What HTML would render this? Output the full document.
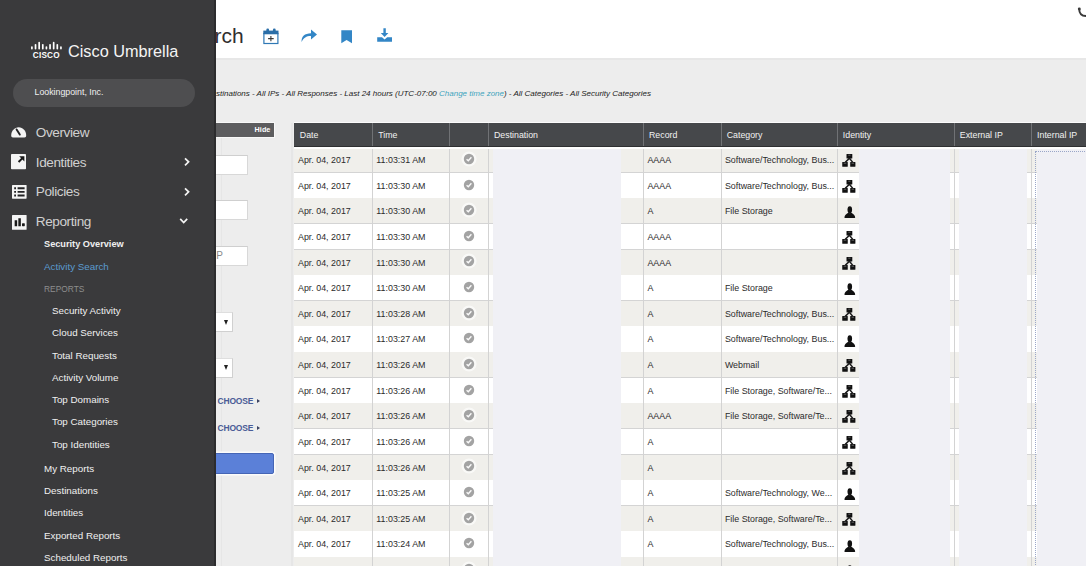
<!DOCTYPE html>
<html><head><meta charset="utf-8">
<style>
*{margin:0;padding:0;box-sizing:border-box}
html,body{width:1086px;height:566px;overflow:hidden;background:#ededed;font-family:"Liberation Sans",sans-serif}
.a{position:absolute;white-space:nowrap}
.nav{position:absolute;left:35.8px;font-size:13.6px;letter-spacing:-0.42px;color:#d0d0d0;white-space:nowrap;line-height:16px}
.sub{position:absolute;left:44px;font-size:9.8px;color:#f0f0f0;white-space:nowrap;line-height:12px}
.sub2{position:absolute;left:52px;font-size:9.8px;color:#f0f0f0;white-space:nowrap;line-height:12px}
.ic{position:absolute;left:11px}
.chev{position:absolute;left:181px}
.hd{position:absolute;top:123px;height:24px;background:#46484b;color:#f2f2f2;font-size:8.8px;line-height:24px;padding-left:5.5px;white-space:nowrap}
.hsep{position:absolute;top:123px;height:24px;width:1px;background:#707275}
.rw{position:absolute;left:294.3px;width:792px}
.cell{position:absolute;font-size:8.9px;color:#2b2b2b;white-space:nowrap}
.vl{position:absolute;width:1px;background:#d3d3d3}
.hl{position:absolute;height:1px;background:#d4d4d4;left:294.3px;width:792px}
</style></head><body>

<div class="a" style="left:0;top:0;width:1086px;height:58.3px;background:#fff"></div>
<div class="a" style="left:0;top:58.3px;width:1086px;height:1.5px;background:#e7e7e7"></div>
<div class="a" style="left:0;width:243.6px;text-align:right;top:23.3px;font-size:21px;line-height:26px;color:#2f2f2f">Activity Search</div>
<svg class="a" style="left:263px;top:27.5px" width="16" height="17" viewBox="0 0 16 17"><rect x="0.9" y="5.5" width="14" height="10" fill="none" stroke="#2f78b5" stroke-width="1.2"/><rect x="0.3" y="2.6" width="15.2" height="3.6" fill="#2a6ea8"/><rect x="3.3" y="0.6" width="2.8" height="3.2" rx="1.3" fill="#2a6ea8"/><rect x="9.9" y="0.6" width="2.8" height="3.2" rx="1.3" fill="#2a6ea8"/><path d="M7.9 7.9V13.3M5.1 10.6H10.7" stroke="#3a3a3a" stroke-width="1.1"/></svg>
<svg class="a" style="left:301px;top:28.5px" width="17" height="14" viewBox="0 0 17 14"><path d="M0.6 13C0.2 7.6 3.6 4.4 10 4.3V0.6L16 5.6L10 10.4V6.9C5.5 6.8 2.7 8.6 0.6 13Z" fill="#3386c6"/></svg>
<svg class="a" style="left:341px;top:29.5px" width="12" height="14" viewBox="0 0 12 14"><path d="M0.3 0.2H11V13.2L5.6 9.9L0.3 13.2Z" fill="#3386c6"/></svg>
<svg class="a" style="left:376.8px;top:28px" width="16" height="14" viewBox="0 0 16 14"><path d="M6.4 0.2H8.8V4.9H11.4L7.6 8.9L3.8 4.9H6.4Z" fill="#3386c6"/><path d="M0.2 9.3H5L7.6 11.4L10.2 9.3H15V13.7H0.2Z" fill="#3386c6"/></svg>
<svg class="a" style="left:1076px;top:6px" width="10" height="13" viewBox="0 0 10 13"><path d="M3.2 2.9C3.2 6.6 4.6 9.7 10 10" stroke="#3a3a3a" stroke-width="1.9" fill="none" stroke-linecap="round"/><circle cx="3.3" cy="3" r="1.45" fill="#3a3a3a"/></svg>
<div class="a" style="left:0;top:87.5px;width:651px;text-align:right;font-size:8px;line-height:11px;font-style:italic;color:#222">All Identities - All Destinations - All IPs - All Responses - Last 24 hours (UTC-07:00 <span style="color:#3fa4bd">Change time zone</span>) - All Categories - All Security Categories</div>
<div class="a" style="left:221px;top:137px;width:1px;height:430px;background:#e6e6e6"></div>
<div class="a" style="left:290.8px;top:123px;width:2.4px;height:444px;background:#e6e6e6"></div>
<div class="a" style="left:150px;top:123px;width:123.5px;height:14px;background:#5d5d5f;box-shadow:0 0 0 1px #f8f8f8"></div>
<div class="a" style="left:254.6px;top:122.7px;font-size:7.2px;line-height:14px;font-weight:bold;color:#fff;letter-spacing:0.05px">Hide</div>
<div class="a" style="left:150px;top:155.3px;width:98px;height:19.8px;background:#fff;border:1px solid #d8d8d8;border-top-color:#cfcfcf"></div>
<div class="a" style="left:150px;top:200.2px;width:98px;height:19.8px;background:#fff;border:1px solid #d8d8d8;border-top-color:#cfcfcf"></div>
<div class="a" style="left:150px;top:246px;width:98px;height:19.8px;background:#fff;border:1px solid #d8d8d8;border-top-color:#cfcfcf"></div>
<div class="a" style="left:213.6px;top:250.3px;font-size:10px;line-height:12px;color:#8a8a8a">IP</div>
<div class="a" style="left:150px;top:312.2px;width:83px;height:20px;background:#fff;border:1px solid #dedede;border-right-color:#d0d0d0;border-bottom-color:#d0d0d0"></div>
<div class="a" style="left:224px;top:319.59999999999997px;width:0;height:0;border-left:2.8px solid transparent;border-right:2.8px solid transparent;border-top:5px solid #222"></div>
<div class="a" style="left:150px;top:357.6px;width:83px;height:20px;background:#fff;border:1px solid #dedede;border-right-color:#d0d0d0;border-bottom-color:#d0d0d0"></div>
<div class="a" style="left:224px;top:365.0px;width:0;height:0;border-left:2.8px solid transparent;border-right:2.8px solid transparent;border-top:5px solid #222"></div>
<div class="a" style="left:217.5px;top:395.5px;font-size:8.5px;line-height:11px;font-weight:bold;color:#4a5c96;letter-spacing:-0.2px">CHOOSE</div>
<div class="a" style="left:257px;top:399.20000000000005px;width:0;height:0;border-top:2.6px solid transparent;border-bottom:2.6px solid transparent;border-left:3px solid #3b4260"></div>
<div class="a" style="left:217.5px;top:422.59999999999997px;font-size:8.5px;line-height:11px;font-weight:bold;color:#4a5c96;letter-spacing:-0.2px">CHOOSE</div>
<div class="a" style="left:257px;top:426.3px;width:0;height:0;border-top:2.6px solid transparent;border-bottom:2.6px solid transparent;border-left:3px solid #3b4260"></div>
<div class="a" style="left:150px;top:452.8px;width:123.8px;height:21.2px;background:#5b80d8;border-radius:2px;border:1px solid #4565b5;box-shadow:0 0 0 1.5px #fbfbfb"></div>
<div class="a" style="left:294.3px;top:121.8px;width:792px;height:1.2px;background:#fbfbfb"></div>
<div class="hd" style="left:294.30px;width:78.40px">Date</div>
<div class="hd" style="left:372.70px;width:77.00px">Time</div>
<div class="hsep" style="left:372.20px"></div>
<div class="hd" style="left:449.70px;width:38.80px"></div>
<div class="hsep" style="left:449.20px"></div>
<div class="hd" style="left:488.50px;width:155.00px">Destination</div>
<div class="hsep" style="left:488.00px"></div>
<div class="hd" style="left:643.50px;width:77.70px">Record</div>
<div class="hsep" style="left:643.00px"></div>
<div class="hd" style="left:721.20px;width:116.10px">Category</div>
<div class="hsep" style="left:720.70px"></div>
<div class="hd" style="left:837.30px;width:117.00px">Identity</div>
<div class="hsep" style="left:836.80px"></div>
<div class="hd" style="left:954.30px;width:77.30px">External IP</div>
<div class="hsep" style="left:953.80px"></div>
<div class="hd" style="left:1031.60px;width:68.40px">Internal IP</div>
<div class="hsep" style="left:1031.10px"></div>
<div class="a" style="left:294.3px;top:146px;width:792px;height:1px;background:#2e2f31"></div>
<div class="rw" style="top:147.00px;height:25.63px;background:#f0efeb"></div>
<div class="cell" style="left:298px;top:155.01px;line-height:11px">Apr. 04, 2017</div>
<div class="cell" style="left:376.3px;top:155.01px;line-height:11px">11:03:31 AM</div>
<div class="a" style="left:461.2px;top:150.91px;width:16px;height:16px"><svg width="16" height="16" viewBox="0 0 16 16"><circle cx="8" cy="8" r="7.6" fill="#fff" opacity="0.6"/><circle cx="8" cy="8" r="5.2" fill="#a3a3a3"/><path d="M5.6 8.2L7.3 9.7L10.4 6.3" stroke="#fafafa" stroke-width="1.4" fill="none"/></svg></div>
<div class="cell" style="left:647.4px;top:155.01px;line-height:11px">AAAA</div>
<div class="cell" style="left:724.9px;top:155.01px;line-height:11px">Software/Technology, Bus...</div>
<div class="a" style="left:842.4px;top:154.12px;width:15px;height:14px"><svg width="15" height="14" viewBox="0 0 15 14"><path d="M7.4 4.2L3.2 8.4M7.4 4.2L10.8 8.4" stroke="#1a1a1a" stroke-width="1.5" fill="none"/><rect x="4.5" y="0" width="5.8" height="4.6" rx="0.5" fill="#111"/><rect x="0.25" y="8" width="5.5" height="4.8" rx="0.5" fill="#111"/><rect x="8.2" y="8" width="5.2" height="4.8" rx="0.5" fill="#111"/><path d="M6.3 1.2H8.5M1.7 9.2H4.3M9.6 9.2H12" stroke="#777" stroke-width="0.8"/></svg></div>
<div class="hl" style="top:172.13px"></div>
<div class="rw" style="top:172.63px;height:25.63px;background:#ffffff"></div>
<div class="cell" style="left:298px;top:180.64px;line-height:11px">Apr. 04, 2017</div>
<div class="cell" style="left:376.3px;top:180.64px;line-height:11px">11:03:30 AM</div>
<div class="a" style="left:461.2px;top:176.54px;width:16px;height:16px"><svg width="16" height="16" viewBox="0 0 16 16"><circle cx="8" cy="8" r="7.6" fill="#fff" opacity="0.6"/><circle cx="8" cy="8" r="5.2" fill="#a3a3a3"/><path d="M5.6 8.2L7.3 9.7L10.4 6.3" stroke="#fafafa" stroke-width="1.4" fill="none"/></svg></div>
<div class="cell" style="left:647.4px;top:180.64px;line-height:11px">AAAA</div>
<div class="cell" style="left:724.9px;top:180.64px;line-height:11px">Software/Technology, Bus...</div>
<div class="a" style="left:842.4px;top:179.75px;width:15px;height:14px"><svg width="15" height="14" viewBox="0 0 15 14"><path d="M7.4 4.2L3.2 8.4M7.4 4.2L10.8 8.4" stroke="#1a1a1a" stroke-width="1.5" fill="none"/><rect x="4.5" y="0" width="5.8" height="4.6" rx="0.5" fill="#111"/><rect x="0.25" y="8" width="5.5" height="4.8" rx="0.5" fill="#111"/><rect x="8.2" y="8" width="5.2" height="4.8" rx="0.5" fill="#111"/><path d="M6.3 1.2H8.5M1.7 9.2H4.3M9.6 9.2H12" stroke="#777" stroke-width="0.8"/></svg></div>
<div class="hl" style="top:197.76px"></div>
<div class="rw" style="top:198.26px;height:25.63px;background:#f0efeb"></div>
<div class="cell" style="left:298px;top:206.27px;line-height:11px">Apr. 04, 2017</div>
<div class="cell" style="left:376.3px;top:206.27px;line-height:11px">11:03:30 AM</div>
<div class="a" style="left:461.2px;top:202.17px;width:16px;height:16px"><svg width="16" height="16" viewBox="0 0 16 16"><circle cx="8" cy="8" r="7.6" fill="#fff" opacity="0.6"/><circle cx="8" cy="8" r="5.2" fill="#a3a3a3"/><path d="M5.6 8.2L7.3 9.7L10.4 6.3" stroke="#fafafa" stroke-width="1.4" fill="none"/></svg></div>
<div class="cell" style="left:647.4px;top:206.27px;line-height:11px">A</div>
<div class="cell" style="left:724.9px;top:206.27px;line-height:11px">File Storage</div>
<div class="a" style="left:843.5px;top:205.47px;width:13px;height:13px"><svg width="13" height="13" viewBox="0 0 13 13"><ellipse cx="5.8" cy="3.7" rx="2.3" ry="3.4" fill="#111"/><path d="M4.5 5.5H7.1V7.8H4.5Z" fill="#111"/><path d="M0.4 11.5C0.6 9.2 2.2 7.9 4.2 6.8L5.8 7.5L7.4 6.8C9.4 7.9 11 9.2 11.2 11.5C11.2 11.8 11 12 10.6 12H1C0.6 12 0.4 11.8 0.4 11.5Z" fill="#111"/></svg></div>
<div class="hl" style="top:223.39px"></div>
<div class="rw" style="top:223.89px;height:25.63px;background:#ffffff"></div>
<div class="cell" style="left:298px;top:231.90px;line-height:11px">Apr. 04, 2017</div>
<div class="cell" style="left:376.3px;top:231.90px;line-height:11px">11:03:30 AM</div>
<div class="a" style="left:461.2px;top:227.80px;width:16px;height:16px"><svg width="16" height="16" viewBox="0 0 16 16"><circle cx="8" cy="8" r="7.6" fill="#fff" opacity="0.6"/><circle cx="8" cy="8" r="5.2" fill="#a3a3a3"/><path d="M5.6 8.2L7.3 9.7L10.4 6.3" stroke="#fafafa" stroke-width="1.4" fill="none"/></svg></div>
<div class="cell" style="left:647.4px;top:231.90px;line-height:11px">AAAA</div>
<div class="a" style="left:842.4px;top:231.00px;width:15px;height:14px"><svg width="15" height="14" viewBox="0 0 15 14"><path d="M7.4 4.2L3.2 8.4M7.4 4.2L10.8 8.4" stroke="#1a1a1a" stroke-width="1.5" fill="none"/><rect x="4.5" y="0" width="5.8" height="4.6" rx="0.5" fill="#111"/><rect x="0.25" y="8" width="5.5" height="4.8" rx="0.5" fill="#111"/><rect x="8.2" y="8" width="5.2" height="4.8" rx="0.5" fill="#111"/><path d="M6.3 1.2H8.5M1.7 9.2H4.3M9.6 9.2H12" stroke="#777" stroke-width="0.8"/></svg></div>
<div class="hl" style="top:249.02px"></div>
<div class="rw" style="top:249.52px;height:25.63px;background:#f0efeb"></div>
<div class="cell" style="left:298px;top:257.53px;line-height:11px">Apr. 04, 2017</div>
<div class="cell" style="left:376.3px;top:257.53px;line-height:11px">11:03:30 AM</div>
<div class="a" style="left:461.2px;top:253.43px;width:16px;height:16px"><svg width="16" height="16" viewBox="0 0 16 16"><circle cx="8" cy="8" r="7.6" fill="#fff" opacity="0.6"/><circle cx="8" cy="8" r="5.2" fill="#a3a3a3"/><path d="M5.6 8.2L7.3 9.7L10.4 6.3" stroke="#fafafa" stroke-width="1.4" fill="none"/></svg></div>
<div class="cell" style="left:647.4px;top:257.53px;line-height:11px">AAAA</div>
<div class="a" style="left:842.4px;top:256.63px;width:15px;height:14px"><svg width="15" height="14" viewBox="0 0 15 14"><path d="M7.4 4.2L3.2 8.4M7.4 4.2L10.8 8.4" stroke="#1a1a1a" stroke-width="1.5" fill="none"/><rect x="4.5" y="0" width="5.8" height="4.6" rx="0.5" fill="#111"/><rect x="0.25" y="8" width="5.5" height="4.8" rx="0.5" fill="#111"/><rect x="8.2" y="8" width="5.2" height="4.8" rx="0.5" fill="#111"/><path d="M6.3 1.2H8.5M1.7 9.2H4.3M9.6 9.2H12" stroke="#777" stroke-width="0.8"/></svg></div>
<div class="hl" style="top:274.65px"></div>
<div class="rw" style="top:275.15px;height:25.63px;background:#ffffff"></div>
<div class="cell" style="left:298px;top:283.16px;line-height:11px">Apr. 04, 2017</div>
<div class="cell" style="left:376.3px;top:283.16px;line-height:11px">11:03:30 AM</div>
<div class="a" style="left:461.2px;top:279.06px;width:16px;height:16px"><svg width="16" height="16" viewBox="0 0 16 16"><circle cx="8" cy="8" r="7.6" fill="#fff" opacity="0.6"/><circle cx="8" cy="8" r="5.2" fill="#a3a3a3"/><path d="M5.6 8.2L7.3 9.7L10.4 6.3" stroke="#fafafa" stroke-width="1.4" fill="none"/></svg></div>
<div class="cell" style="left:647.4px;top:283.16px;line-height:11px">A</div>
<div class="cell" style="left:724.9px;top:283.16px;line-height:11px">File Storage</div>
<div class="a" style="left:843.5px;top:282.36px;width:13px;height:13px"><svg width="13" height="13" viewBox="0 0 13 13"><ellipse cx="5.8" cy="3.7" rx="2.3" ry="3.4" fill="#111"/><path d="M4.5 5.5H7.1V7.8H4.5Z" fill="#111"/><path d="M0.4 11.5C0.6 9.2 2.2 7.9 4.2 6.8L5.8 7.5L7.4 6.8C9.4 7.9 11 9.2 11.2 11.5C11.2 11.8 11 12 10.6 12H1C0.6 12 0.4 11.8 0.4 11.5Z" fill="#111"/></svg></div>
<div class="hl" style="top:300.28px"></div>
<div class="rw" style="top:300.78px;height:25.63px;background:#f0efeb"></div>
<div class="cell" style="left:298px;top:308.79px;line-height:11px">Apr. 04, 2017</div>
<div class="cell" style="left:376.3px;top:308.79px;line-height:11px">11:03:28 AM</div>
<div class="a" style="left:461.2px;top:304.69px;width:16px;height:16px"><svg width="16" height="16" viewBox="0 0 16 16"><circle cx="8" cy="8" r="7.6" fill="#fff" opacity="0.6"/><circle cx="8" cy="8" r="5.2" fill="#a3a3a3"/><path d="M5.6 8.2L7.3 9.7L10.4 6.3" stroke="#fafafa" stroke-width="1.4" fill="none"/></svg></div>
<div class="cell" style="left:647.4px;top:308.79px;line-height:11px">A</div>
<div class="cell" style="left:724.9px;top:308.79px;line-height:11px">Software/Technology, Bus...</div>
<div class="a" style="left:842.4px;top:307.89px;width:15px;height:14px"><svg width="15" height="14" viewBox="0 0 15 14"><path d="M7.4 4.2L3.2 8.4M7.4 4.2L10.8 8.4" stroke="#1a1a1a" stroke-width="1.5" fill="none"/><rect x="4.5" y="0" width="5.8" height="4.6" rx="0.5" fill="#111"/><rect x="0.25" y="8" width="5.5" height="4.8" rx="0.5" fill="#111"/><rect x="8.2" y="8" width="5.2" height="4.8" rx="0.5" fill="#111"/><path d="M6.3 1.2H8.5M1.7 9.2H4.3M9.6 9.2H12" stroke="#777" stroke-width="0.8"/></svg></div>
<div class="hl" style="top:325.91px"></div>
<div class="rw" style="top:326.41px;height:25.63px;background:#ffffff"></div>
<div class="cell" style="left:298px;top:334.42px;line-height:11px">Apr. 04, 2017</div>
<div class="cell" style="left:376.3px;top:334.42px;line-height:11px">11:03:27 AM</div>
<div class="a" style="left:461.2px;top:330.32px;width:16px;height:16px"><svg width="16" height="16" viewBox="0 0 16 16"><circle cx="8" cy="8" r="7.6" fill="#fff" opacity="0.6"/><circle cx="8" cy="8" r="5.2" fill="#a3a3a3"/><path d="M5.6 8.2L7.3 9.7L10.4 6.3" stroke="#fafafa" stroke-width="1.4" fill="none"/></svg></div>
<div class="cell" style="left:647.4px;top:334.42px;line-height:11px">A</div>
<div class="cell" style="left:724.9px;top:334.42px;line-height:11px">Software/Technology, Bus...</div>
<div class="a" style="left:843.5px;top:333.62px;width:13px;height:13px"><svg width="13" height="13" viewBox="0 0 13 13"><ellipse cx="5.8" cy="3.7" rx="2.3" ry="3.4" fill="#111"/><path d="M4.5 5.5H7.1V7.8H4.5Z" fill="#111"/><path d="M0.4 11.5C0.6 9.2 2.2 7.9 4.2 6.8L5.8 7.5L7.4 6.8C9.4 7.9 11 9.2 11.2 11.5C11.2 11.8 11 12 10.6 12H1C0.6 12 0.4 11.8 0.4 11.5Z" fill="#111"/></svg></div>
<div class="hl" style="top:351.54px"></div>
<div class="rw" style="top:352.04px;height:25.63px;background:#f0efeb"></div>
<div class="cell" style="left:298px;top:360.05px;line-height:11px">Apr. 04, 2017</div>
<div class="cell" style="left:376.3px;top:360.05px;line-height:11px">11:03:26 AM</div>
<div class="a" style="left:461.2px;top:355.95px;width:16px;height:16px"><svg width="16" height="16" viewBox="0 0 16 16"><circle cx="8" cy="8" r="7.6" fill="#fff" opacity="0.6"/><circle cx="8" cy="8" r="5.2" fill="#a3a3a3"/><path d="M5.6 8.2L7.3 9.7L10.4 6.3" stroke="#fafafa" stroke-width="1.4" fill="none"/></svg></div>
<div class="cell" style="left:647.4px;top:360.05px;line-height:11px">A</div>
<div class="cell" style="left:724.9px;top:360.05px;line-height:11px">Webmail</div>
<div class="a" style="left:842.4px;top:359.15px;width:15px;height:14px"><svg width="15" height="14" viewBox="0 0 15 14"><path d="M7.4 4.2L3.2 8.4M7.4 4.2L10.8 8.4" stroke="#1a1a1a" stroke-width="1.5" fill="none"/><rect x="4.5" y="0" width="5.8" height="4.6" rx="0.5" fill="#111"/><rect x="0.25" y="8" width="5.5" height="4.8" rx="0.5" fill="#111"/><rect x="8.2" y="8" width="5.2" height="4.8" rx="0.5" fill="#111"/><path d="M6.3 1.2H8.5M1.7 9.2H4.3M9.6 9.2H12" stroke="#777" stroke-width="0.8"/></svg></div>
<div class="hl" style="top:377.17px"></div>
<div class="rw" style="top:377.67px;height:25.63px;background:#ffffff"></div>
<div class="cell" style="left:298px;top:385.68px;line-height:11px">Apr. 04, 2017</div>
<div class="cell" style="left:376.3px;top:385.68px;line-height:11px">11:03:26 AM</div>
<div class="a" style="left:461.2px;top:381.58px;width:16px;height:16px"><svg width="16" height="16" viewBox="0 0 16 16"><circle cx="8" cy="8" r="7.6" fill="#fff" opacity="0.6"/><circle cx="8" cy="8" r="5.2" fill="#a3a3a3"/><path d="M5.6 8.2L7.3 9.7L10.4 6.3" stroke="#fafafa" stroke-width="1.4" fill="none"/></svg></div>
<div class="cell" style="left:647.4px;top:385.68px;line-height:11px">A</div>
<div class="cell" style="left:724.9px;top:385.68px;line-height:11px">File Storage, Software/Te...</div>
<div class="a" style="left:842.4px;top:384.78px;width:15px;height:14px"><svg width="15" height="14" viewBox="0 0 15 14"><path d="M7.4 4.2L3.2 8.4M7.4 4.2L10.8 8.4" stroke="#1a1a1a" stroke-width="1.5" fill="none"/><rect x="4.5" y="0" width="5.8" height="4.6" rx="0.5" fill="#111"/><rect x="0.25" y="8" width="5.5" height="4.8" rx="0.5" fill="#111"/><rect x="8.2" y="8" width="5.2" height="4.8" rx="0.5" fill="#111"/><path d="M6.3 1.2H8.5M1.7 9.2H4.3M9.6 9.2H12" stroke="#777" stroke-width="0.8"/></svg></div>
<div class="hl" style="top:402.80px"></div>
<div class="rw" style="top:403.30px;height:25.63px;background:#f0efeb"></div>
<div class="cell" style="left:298px;top:411.31px;line-height:11px">Apr. 04, 2017</div>
<div class="cell" style="left:376.3px;top:411.31px;line-height:11px">11:03:26 AM</div>
<div class="a" style="left:461.2px;top:407.22px;width:16px;height:16px"><svg width="16" height="16" viewBox="0 0 16 16"><circle cx="8" cy="8" r="7.6" fill="#fff" opacity="0.6"/><circle cx="8" cy="8" r="5.2" fill="#a3a3a3"/><path d="M5.6 8.2L7.3 9.7L10.4 6.3" stroke="#fafafa" stroke-width="1.4" fill="none"/></svg></div>
<div class="cell" style="left:647.4px;top:411.31px;line-height:11px">AAAA</div>
<div class="cell" style="left:724.9px;top:411.31px;line-height:11px">File Storage, Software/Te...</div>
<div class="a" style="left:842.4px;top:410.42px;width:15px;height:14px"><svg width="15" height="14" viewBox="0 0 15 14"><path d="M7.4 4.2L3.2 8.4M7.4 4.2L10.8 8.4" stroke="#1a1a1a" stroke-width="1.5" fill="none"/><rect x="4.5" y="0" width="5.8" height="4.6" rx="0.5" fill="#111"/><rect x="0.25" y="8" width="5.5" height="4.8" rx="0.5" fill="#111"/><rect x="8.2" y="8" width="5.2" height="4.8" rx="0.5" fill="#111"/><path d="M6.3 1.2H8.5M1.7 9.2H4.3M9.6 9.2H12" stroke="#777" stroke-width="0.8"/></svg></div>
<div class="hl" style="top:428.43px"></div>
<div class="rw" style="top:428.93px;height:25.63px;background:#ffffff"></div>
<div class="cell" style="left:298px;top:436.94px;line-height:11px">Apr. 04, 2017</div>
<div class="cell" style="left:376.3px;top:436.94px;line-height:11px">11:03:26 AM</div>
<div class="a" style="left:461.2px;top:432.85px;width:16px;height:16px"><svg width="16" height="16" viewBox="0 0 16 16"><circle cx="8" cy="8" r="7.6" fill="#fff" opacity="0.6"/><circle cx="8" cy="8" r="5.2" fill="#a3a3a3"/><path d="M5.6 8.2L7.3 9.7L10.4 6.3" stroke="#fafafa" stroke-width="1.4" fill="none"/></svg></div>
<div class="cell" style="left:647.4px;top:436.94px;line-height:11px">A</div>
<div class="a" style="left:842.4px;top:436.05px;width:15px;height:14px"><svg width="15" height="14" viewBox="0 0 15 14"><path d="M7.4 4.2L3.2 8.4M7.4 4.2L10.8 8.4" stroke="#1a1a1a" stroke-width="1.5" fill="none"/><rect x="4.5" y="0" width="5.8" height="4.6" rx="0.5" fill="#111"/><rect x="0.25" y="8" width="5.5" height="4.8" rx="0.5" fill="#111"/><rect x="8.2" y="8" width="5.2" height="4.8" rx="0.5" fill="#111"/><path d="M6.3 1.2H8.5M1.7 9.2H4.3M9.6 9.2H12" stroke="#777" stroke-width="0.8"/></svg></div>
<div class="hl" style="top:454.06px"></div>
<div class="rw" style="top:454.56px;height:25.63px;background:#f0efeb"></div>
<div class="cell" style="left:298px;top:462.57px;line-height:11px">Apr. 04, 2017</div>
<div class="cell" style="left:376.3px;top:462.57px;line-height:11px">11:03:26 AM</div>
<div class="a" style="left:461.2px;top:458.48px;width:16px;height:16px"><svg width="16" height="16" viewBox="0 0 16 16"><circle cx="8" cy="8" r="7.6" fill="#fff" opacity="0.6"/><circle cx="8" cy="8" r="5.2" fill="#a3a3a3"/><path d="M5.6 8.2L7.3 9.7L10.4 6.3" stroke="#fafafa" stroke-width="1.4" fill="none"/></svg></div>
<div class="cell" style="left:647.4px;top:462.57px;line-height:11px">A</div>
<div class="a" style="left:842.4px;top:461.68px;width:15px;height:14px"><svg width="15" height="14" viewBox="0 0 15 14"><path d="M7.4 4.2L3.2 8.4M7.4 4.2L10.8 8.4" stroke="#1a1a1a" stroke-width="1.5" fill="none"/><rect x="4.5" y="0" width="5.8" height="4.6" rx="0.5" fill="#111"/><rect x="0.25" y="8" width="5.5" height="4.8" rx="0.5" fill="#111"/><rect x="8.2" y="8" width="5.2" height="4.8" rx="0.5" fill="#111"/><path d="M6.3 1.2H8.5M1.7 9.2H4.3M9.6 9.2H12" stroke="#777" stroke-width="0.8"/></svg></div>
<div class="hl" style="top:479.69px"></div>
<div class="rw" style="top:480.19px;height:25.63px;background:#ffffff"></div>
<div class="cell" style="left:298px;top:488.20px;line-height:11px">Apr. 04, 2017</div>
<div class="cell" style="left:376.3px;top:488.20px;line-height:11px">11:03:25 AM</div>
<div class="a" style="left:461.2px;top:484.11px;width:16px;height:16px"><svg width="16" height="16" viewBox="0 0 16 16"><circle cx="8" cy="8" r="7.6" fill="#fff" opacity="0.6"/><circle cx="8" cy="8" r="5.2" fill="#a3a3a3"/><path d="M5.6 8.2L7.3 9.7L10.4 6.3" stroke="#fafafa" stroke-width="1.4" fill="none"/></svg></div>
<div class="cell" style="left:647.4px;top:488.20px;line-height:11px">A</div>
<div class="cell" style="left:724.9px;top:488.20px;line-height:11px">Software/Technology, We...</div>
<div class="a" style="left:843.5px;top:487.40px;width:13px;height:13px"><svg width="13" height="13" viewBox="0 0 13 13"><ellipse cx="5.8" cy="3.7" rx="2.3" ry="3.4" fill="#111"/><path d="M4.5 5.5H7.1V7.8H4.5Z" fill="#111"/><path d="M0.4 11.5C0.6 9.2 2.2 7.9 4.2 6.8L5.8 7.5L7.4 6.8C9.4 7.9 11 9.2 11.2 11.5C11.2 11.8 11 12 10.6 12H1C0.6 12 0.4 11.8 0.4 11.5Z" fill="#111"/></svg></div>
<div class="hl" style="top:505.32px"></div>
<div class="rw" style="top:505.82px;height:25.63px;background:#f0efeb"></div>
<div class="cell" style="left:298px;top:513.84px;line-height:11px">Apr. 04, 2017</div>
<div class="cell" style="left:376.3px;top:513.84px;line-height:11px">11:03:25 AM</div>
<div class="a" style="left:461.2px;top:509.74px;width:16px;height:16px"><svg width="16" height="16" viewBox="0 0 16 16"><circle cx="8" cy="8" r="7.6" fill="#fff" opacity="0.6"/><circle cx="8" cy="8" r="5.2" fill="#a3a3a3"/><path d="M5.6 8.2L7.3 9.7L10.4 6.3" stroke="#fafafa" stroke-width="1.4" fill="none"/></svg></div>
<div class="cell" style="left:647.4px;top:513.84px;line-height:11px">A</div>
<div class="cell" style="left:724.9px;top:513.84px;line-height:11px">File Storage, Software/Te...</div>
<div class="a" style="left:842.4px;top:512.93px;width:15px;height:14px"><svg width="15" height="14" viewBox="0 0 15 14"><path d="M7.4 4.2L3.2 8.4M7.4 4.2L10.8 8.4" stroke="#1a1a1a" stroke-width="1.5" fill="none"/><rect x="4.5" y="0" width="5.8" height="4.6" rx="0.5" fill="#111"/><rect x="0.25" y="8" width="5.5" height="4.8" rx="0.5" fill="#111"/><rect x="8.2" y="8" width="5.2" height="4.8" rx="0.5" fill="#111"/><path d="M6.3 1.2H8.5M1.7 9.2H4.3M9.6 9.2H12" stroke="#777" stroke-width="0.8"/></svg></div>
<div class="hl" style="top:530.95px"></div>
<div class="rw" style="top:531.45px;height:25.63px;background:#ffffff"></div>
<div class="cell" style="left:298px;top:539.47px;line-height:11px">Apr. 04, 2017</div>
<div class="cell" style="left:376.3px;top:539.47px;line-height:11px">11:03:24 AM</div>
<div class="a" style="left:461.2px;top:535.37px;width:16px;height:16px"><svg width="16" height="16" viewBox="0 0 16 16"><circle cx="8" cy="8" r="7.6" fill="#fff" opacity="0.6"/><circle cx="8" cy="8" r="5.2" fill="#a3a3a3"/><path d="M5.6 8.2L7.3 9.7L10.4 6.3" stroke="#fafafa" stroke-width="1.4" fill="none"/></svg></div>
<div class="cell" style="left:647.4px;top:539.47px;line-height:11px">A</div>
<div class="cell" style="left:724.9px;top:539.47px;line-height:11px">Software/Technology, Bus...</div>
<div class="a" style="left:843.5px;top:538.67px;width:13px;height:13px"><svg width="13" height="13" viewBox="0 0 13 13"><ellipse cx="5.8" cy="3.7" rx="2.3" ry="3.4" fill="#111"/><path d="M4.5 5.5H7.1V7.8H4.5Z" fill="#111"/><path d="M0.4 11.5C0.6 9.2 2.2 7.9 4.2 6.8L5.8 7.5L7.4 6.8C9.4 7.9 11 9.2 11.2 11.5C11.2 11.8 11 12 10.6 12H1C0.6 12 0.4 11.8 0.4 11.5Z" fill="#111"/></svg></div>
<div class="hl" style="top:556.58px"></div>
<div class="rw" style="top:557.08px;height:25.63px;background:#f0efeb"></div>
<div class="cell" style="left:298px;top:565.10px;line-height:11px">Apr. 04, 2017</div>
<div class="cell" style="left:376.3px;top:565.10px;line-height:11px">11:03:24 AM</div>
<div class="a" style="left:461.2px;top:561.00px;width:16px;height:16px"><svg width="16" height="16" viewBox="0 0 16 16"><circle cx="8" cy="8" r="7.6" fill="#fff" opacity="0.6"/><circle cx="8" cy="8" r="5.2" fill="#a3a3a3"/><path d="M5.6 8.2L7.3 9.7L10.4 6.3" stroke="#fafafa" stroke-width="1.4" fill="none"/></svg></div>
<div class="cell" style="left:647.4px;top:565.10px;line-height:11px">A</div>
<div class="cell" style="left:724.9px;top:565.10px;line-height:11px">Software/Technology, Bus...</div>
<div class="a" style="left:843.5px;top:564.29px;width:13px;height:13px"><svg width="13" height="13" viewBox="0 0 13 13"><ellipse cx="5.8" cy="3.7" rx="2.3" ry="3.4" fill="#111"/><path d="M4.5 5.5H7.1V7.8H4.5Z" fill="#111"/><path d="M0.4 11.5C0.6 9.2 2.2 7.9 4.2 6.8L5.8 7.5L7.4 6.8C9.4 7.9 11 9.2 11.2 11.5C11.2 11.8 11 12 10.6 12H1C0.6 12 0.4 11.8 0.4 11.5Z" fill="#111"/></svg></div>
<div class="hl" style="top:582.21px"></div>
<div class="vl" style="left:372.20px;top:147px;height:420px"></div>
<div class="vl" style="left:449.20px;top:147px;height:420px"></div>
<div class="vl" style="left:488.00px;top:147px;height:420px"></div>
<div class="vl" style="left:643.00px;top:147px;height:420px"></div>
<div class="vl" style="left:720.70px;top:147px;height:420px"></div>
<div class="vl" style="left:836.80px;top:147px;height:420px"></div>
<div class="vl" style="left:953.80px;top:147px;height:420px"></div>
<div class="vl" style="left:1031.10px;top:147px;height:420px"></div>
<div class="a" style="left:492.8px;top:148.5px;width:128.4px;height:420px;background:#f0f0f5"></div>
<div class="a" style="left:858.5px;top:147px;width:91.5px;height:420px;background:#f0f0f5"></div>
<div class="a" style="left:958.5px;top:147px;width:68.3px;height:420px;background:#f0f0f5"></div>
<div class="a" style="left:1037px;top:147px;width:50px;height:420px;background:#f0f0f5"></div>
<div class="a" style="left:1035px;top:151px;width:0;height:420px;border-left:1px dotted #9aa6c8"></div>
<div class="a" style="left:1035px;top:151px;width:60px;height:0;border-top:1px dotted #9aa6c8"></div>
<div class="a" style="left:294.3px;top:147px;width:792px;height:2px;background:#fdfdfd"></div>
<div class="a" style="left:0;top:0;width:216px;height:566px;background:#3a3a3c"></div>
<div class="a" style="left:213.6px;top:0;width:2.4px;height:566px;background:#2c2c2e"></div>
<svg class="a" style="left:30px;top:41px" width="33" height="18" viewBox="0 0 33 18"><rect x="1.05" y="5.20" width="1.7" height="3.20" rx="0.85" fill="#fff"/><rect x="4.68" y="3.00" width="1.7" height="5.40" rx="0.85" fill="#fff"/><rect x="8.31" y="0.80" width="1.7" height="7.60" rx="0.85" fill="#fff"/><rect x="11.94" y="3.00" width="1.7" height="5.40" rx="0.85" fill="#fff"/><rect x="15.57" y="5.20" width="1.7" height="3.20" rx="0.85" fill="#fff"/><rect x="19.20" y="3.00" width="1.7" height="5.40" rx="0.85" fill="#fff"/><rect x="22.83" y="0.80" width="1.7" height="7.60" rx="0.85" fill="#fff"/><rect x="26.46" y="3.00" width="1.7" height="5.40" rx="0.85" fill="#fff"/><rect x="30.09" y="5.20" width="1.7" height="3.20" rx="0.85" fill="#fff"/><text x="16.3" y="16.7" font-family="Liberation Sans" font-weight="bold" font-size="8.2" fill="#fff" text-anchor="middle" letter-spacing="0.2">CISCO</text></svg>
<div class="a" style="left:68px;top:42px;font-size:16.3px;line-height:19px;color:#f4f4f4">Cisco Umbrella</div>
<div class="a" style="left:13px;top:79px;width:182px;height:27.5px;border-radius:14px;background:#4e4e50"></div>
<div class="a" style="left:34.5px;top:86.5px;font-size:8.8px;line-height:11px;color:#f0f0f0">Lookingpoint, Inc.</div>
<div class="nav" style="top:124.50000000000001px">Overview</div>
<div class="nav" style="top:154.5px">Identities</div>
<div class="nav" style="top:184.0px">Policies</div>
<div class="nav" style="top:213.7px">Reporting</div>
<svg class="ic" style="top:127.3px;left:11.4px" width="16" height="11" viewBox="0 0 16 11"><path d="M0.2 8.6C0.2 3.9 3.5 0.3 7.7 0.3S15.2 3.9 15.2 8.6C15.2 9.9 14.6 10.6 13.4 10.6H2C0.8 10.6 0.2 9.9 0.2 8.6Z" fill="#f4f4f4"/><path d="M5.6 2.4L8.8 7.6" stroke="#222224" stroke-width="1.9" stroke-linecap="round"/></svg>
<svg class="ic" style="top:154.4px;left:11.4px" width="16" height="16" viewBox="0 0 16 16"><rect x="0" y="0" width="15" height="15.3" rx="0.8" fill="#f4f4f4"/><path d="M7.6 8L12.2 3.4" stroke="#1a1a1a" stroke-width="2" fill="none"/><path d="M8.2 2.2H13.4V7.4Z" fill="#1a1a1a"/></svg>
<svg class="ic" style="top:184.6px;left:11.6px" width="15" height="14" viewBox="0 0 15 14"><rect x="0" y="0" width="14.6" height="13.7" rx="0.6" fill="#f4f4f4"/><path d="M2.2 3.2H4M5.6 3.2H12.6M2.2 6.9H4M5.6 6.9H12.6M2.2 10.5H4M5.6 10.5H12.6" stroke="#222224" stroke-width="1.9"/></svg>
<svg class="ic" style="top:215px;left:11.6px" width="15" height="15" viewBox="0 0 15 15"><rect x="0" y="0" width="14.6" height="14.8" rx="0.6" fill="#f4f4f4"/><path d="M3.9 5.2V11.2M7.6 3.2V11.2" stroke="#1a1a1a" stroke-width="2.5"/><rect x="10" y="8.2" width="2.8" height="3" rx="0.6" fill="#1a1a1a"/></svg>
<svg class="chev" style="top:156.9px;left:182.5px" width="8" height="10" viewBox="0 0 8 10"><path d="M2 1.3L5.6 4.8L2 8.3" stroke="#f4f4f4" stroke-width="1.7" fill="none"/></svg>
<svg class="chev" style="top:186.70000000000002px;left:182.5px" width="8" height="10" viewBox="0 0 8 10"><path d="M2 1.3L5.6 4.8L2 8.3" stroke="#f4f4f4" stroke-width="1.7" fill="none"/></svg>
<svg class="chev" style="top:216.6px;left:179.3px" width="10" height="8" viewBox="0 0 10 8"><path d="M1.2 1.8L4.7 5.6L8.2 1.8" stroke="#f4f4f4" stroke-width="1.7" fill="none"/></svg>
<div class="sub" style="top:238px;font-weight:bold;font-size:9.2px">Security Overview</div>
<div class="sub" style="top:260.5px;color:#5a9bd0">Activity Search</div>
<div class="sub" style="top:282.5px;color:#8e8e8e;font-size:8.4px">REPORTS</div>
<div class="sub2" style="top:305.1px">Security Activity</div>
<div class="sub2" style="top:327.1px">Cloud Services</div>
<div class="sub2" style="top:349.6px">Total Requests</div>
<div class="sub2" style="top:371.6px">Activity Volume</div>
<div class="sub2" style="top:394.1px">Top Domains</div>
<div class="sub2" style="top:416.1px">Top Categories</div>
<div class="sub2" style="top:438.6px">Top Identities</div>
<div class="sub" style="top:462.6px">My Reports</div>
<div class="sub" style="top:485.1px">Destinations</div>
<div class="sub" style="top:507.1px">Identities</div>
<div class="sub" style="top:529.6px">Exported Reports</div>
<div class="sub" style="top:552.1px">Scheduled Reports</div>
</body></html>
